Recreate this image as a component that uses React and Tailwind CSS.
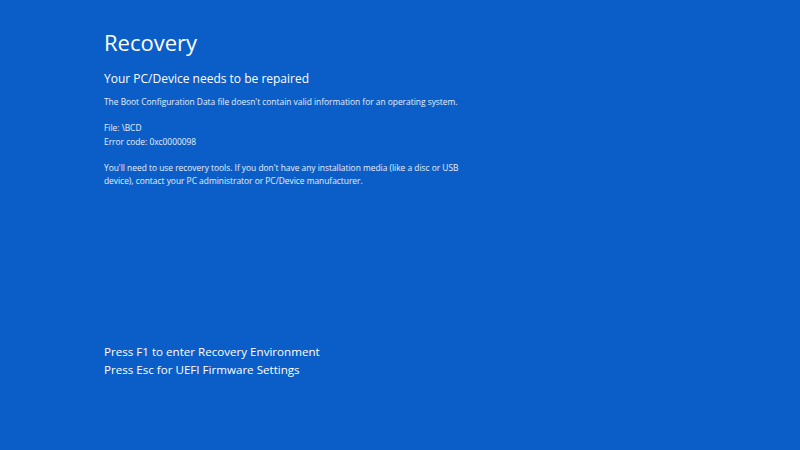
export default function App() {
  return (
    <div className="w-[800px] h-[450px] bg-[#0b5ec7] text-white flex flex-col pl-[104px] overflow-hidden" style={{ fontFamily: '"Open Sans", "Noto Sans", sans-serif' }}>
      <h1 className="mt-[27px] text-[22px] leading-[30px] font-normal">Recovery</h1>
      <h2 className="mt-[13px] text-[12px] leading-[18px]">Your PC/Device needs to be repaired</h2>
      <p className="mt-[7px] text-[8.4px] leading-[14px] text-white/90">The Boot Configuration Data file doesn't contain valid information for an operating system.</p>
      <div className="mt-[12px] text-[8.4px] leading-[14px] text-white/90">
        <p>File: \BCD</p>
        <p>Error code: 0xc0000098</p>
      </div>
      <p className="mt-[12px] w-[362px] text-[8.4px] leading-[13px] text-white/90">You'll need to use recovery tools. If you don't have any installation media (like a disc or USB device), contact your PC administrator or PC/Device manufacturer.</p>
      <div className="mt-auto mb-[71px] text-[11.6px] leading-[18px]">
        <p>Press F1 to enter Recovery Environment</p>
        <p>Press Esc for UEFI Firmware Settings</p>
      </div>
    </div>
  );
}
